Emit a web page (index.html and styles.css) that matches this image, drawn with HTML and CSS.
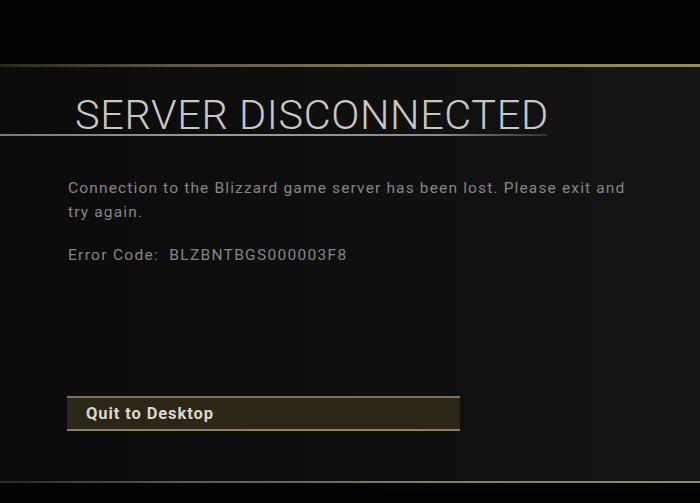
FILE: index.html
```html
<!DOCTYPE html>
<html>
<head>
<meta charset="utf-8">
<link rel="stylesheet" href="styles.css">
</head>
<body>
<div class="top"></div>
<div class="panel">
  <div class="title-wrap">
    <h1 class="title">SERVER DISCONNECTED</h1>
  </div>
  <div class="body">
    <p class="msg">Connection to the Blizzard game server has been lost. Please exit and try again.</p>
    <p class="code">Error Code:&nbsp; BLZBNTBGS000003F8</p>
  </div>
  <div class="actions">
    <button class="btn">Quit to Desktop</button>
  </div>
</div>
<div class="bottom"></div>
</body>
</html>
```
FILE: styles.css
```css
html, body {
  margin: 0;
  padding: 0;
  background: #020202;
  width: 700px;
  height: 503px;
  overflow: hidden;
  font-family: Roboto, "Liberation Sans", sans-serif;
}
.top {
  height: 64px;
  background: #020202;
}
.panel {
  height: 414px;
  border-top: 3px solid transparent;
  border-bottom: 2px solid transparent;
  border-image: linear-gradient(90deg, #2a271e 0%, #5e5740 25%, #857b58 60%, #958a64 100%) 1;
  border-left: 0;
  border-right: 0;
  background: linear-gradient(90deg, #0b0b0b 0%, #0f0f0f 50%, #141414 100%);
  display: flex;
  flex-direction: column;
}
.title-wrap {
  width: 547px;
  padding-top: 26px;
  border-bottom: 2px solid transparent;
  border-image: linear-gradient(90deg, #777 0%, #9a9a9a 40%, #8a8a8a 80%, rgba(120,120,120,0.3) 100%) 1;
  border-top: 0; border-left: 0; border-right: 0;
}
.title {
  margin: 0 0 0 75px;
  font-weight: 300;
  font-size: 41.5px;
  line-height: 44px;
  color: #c8c8c6;
  letter-spacing: 0.6px;
  height: 41px;
  white-space: nowrap;
}
.body {
  padding: 40px 0 0 68px;
  width: 575px;
}
.msg {
  margin: 0;
  font-size: 15.5px;
  line-height: 24px;
  color: #858585;
  letter-spacing: 1.15px;
}
.code {
  margin: 19px 0 0;
  font-size: 15.5px;
  line-height: 24px;
  color: #858585;
  letter-spacing: 1.3px;
}
.actions {
  padding: 129px 0 0 67px;
}
.btn {
  display: flex;
  align-items: center;
  width: 393px;
  height: 35px;
  margin: 0;
  padding: 0 0 0 19px;
  background: #2a2618;
  border: 0;
  border-top: 2px solid #7d7352;
  border-bottom: 2px solid #8a8060;
  color: #dcd8cc;
  font-family: Roboto, "Liberation Sans", sans-serif;
  font-weight: 700;
  font-size: 16.5px;
  letter-spacing: 0.9px;
  text-align: left;
}
.bottom {
  height: 21px;
}
```
